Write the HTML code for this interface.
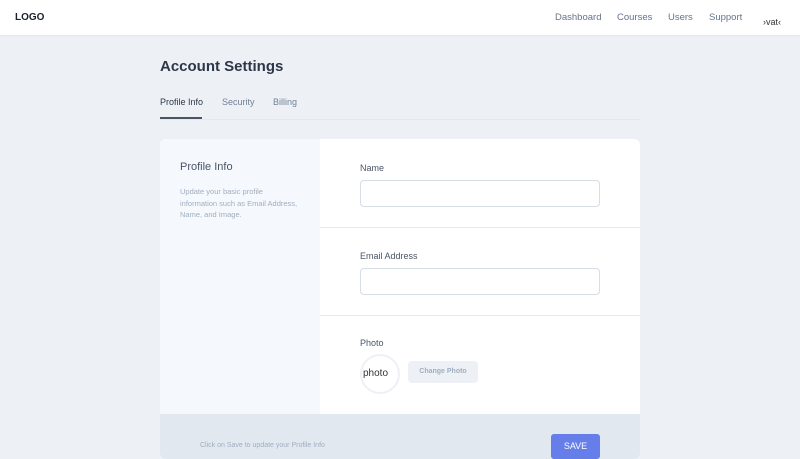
<!DOCTYPE html>
<html><head><style>
*{margin:0;padding:0;box-sizing:border-box}
body{width:800px;height:450px;overflow:hidden;background:#edf1f6;font-family:"Liberation Sans",sans-serif;position:relative}
.nav{position:absolute;top:0;left:0;width:800px;height:35px;background:#fff;box-shadow:0 1px 2px rgba(0,0,0,.05)}
.abs{position:absolute;white-space:nowrap}
.navl{font-size:9.5px;color:#64748b;top:12px}
.card{position:absolute;left:160px;top:139px;width:480px;height:320px;border-radius:6px;overflow:hidden;background:#fff}
.side{position:absolute;left:0;top:0;width:160px;height:275px;background:#f5f8fc}
.input{position:absolute;left:200px;width:240px;height:27px;border:1px solid #d6dde6;border-radius:4px;background:#fff}
.lbl{font-size:9px;color:#4a5568}
.hr{position:absolute;left:160px;width:320px;height:1px;background:#e5e9ef}
</style></head><body>
<div class="nav">
<div class="abs" style="left:15px;top:12px;font-size:10px;font-weight:bold;color:#1a202c">LOGO</div>
<div class="abs navl" style="left:555px">Dashboard</div>
<div class="abs navl" style="left:617px">Courses</div>
<div class="abs navl" style="left:668px">Users</div>
<div class="abs navl" style="left:709px">Support</div>
<div class="abs" style="left:763px;top:17px;font-size:9px;color:#333">›vat‹</div>
</div>
<div class="abs" style="left:160px;top:58px;font-size:15px;font-weight:bold;color:#2d3748">Account Settings</div>
<div class="abs" style="left:160px;top:97px;font-size:9px;color:#2d3748">Profile Info</div>
<div class="abs" style="left:222px;top:97px;font-size:9px;color:#718096">Security</div>
<div class="abs" style="left:273px;top:97px;font-size:9px;color:#718096">Billing</div>
<div class="abs" style="left:160px;top:119px;width:480px;height:1px;background:#e2e8f0"></div>
<div class="abs" style="left:160px;top:117px;width:42px;height:2px;background:#4a5568"></div>
<div class="card">
<div class="side"></div>
<div class="abs" style="left:20px;top:22px;font-size:11px;color:#4a5568">Profile Info</div>
<div class="abs" style="left:20px;top:47px;font-size:7.5px;color:#a0aec0;line-height:11.5px;white-space:normal;width:122px">Update your basic profile information such as Email Address, Name, and Image.</div>
<div class="abs lbl" style="left:200px;top:24px">Name</div>
<div class="input" style="top:41px"></div>
<div class="hr" style="top:88px"></div>
<div class="abs lbl" style="left:200px;top:112px">Email Address</div>
<div class="input" style="top:129px"></div>
<div class="hr" style="top:176px"></div>
<div class="abs lbl" style="left:200px;top:199px">Photo</div>
<div class="abs" style="left:200px;top:215px;width:40px;height:40px;border-radius:50%;border:2px solid #edf1f6"></div>
<div class="abs" style="left:203px;top:229px;font-size:10px;color:#333">photo</div>
<div class="abs" style="left:248px;top:222px;width:70px;height:22px;background:#edf1f6;border-radius:4px;font-size:7px;font-weight:bold;color:#a0aec0;text-align:center;line-height:22px">Change Photo</div>
<div class="abs" style="left:0;top:275px;width:480px;height:50px;background:#e2e8f0"></div>
<div class="abs" style="left:40px;top:303px;font-size:7px;color:#a0aec0">Click on Save to update your Profile Info</div>
<div class="abs" style="left:391px;top:295px;width:49px;height:25px;background:#667eea;border-radius:3px;color:#fff;font-size:9px;text-align:center;line-height:24px">SAVE</div>
</div>
</body></html>
